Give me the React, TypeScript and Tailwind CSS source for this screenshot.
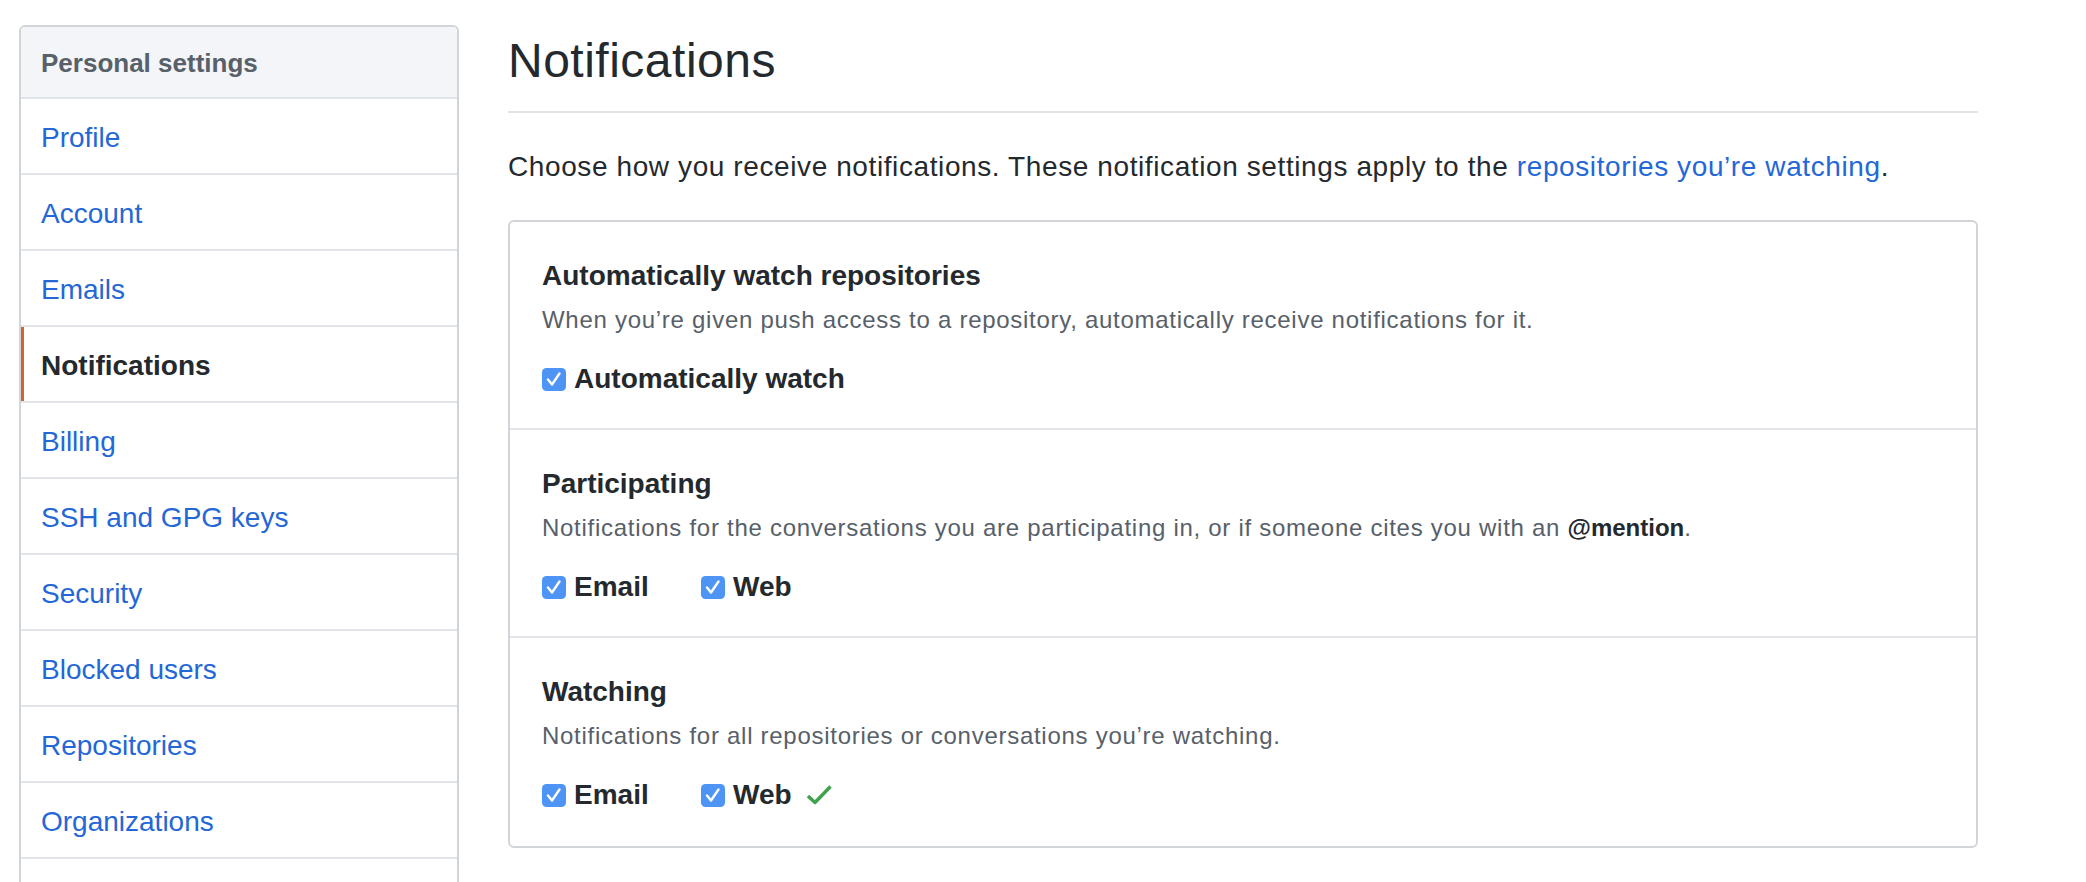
import React from "react";

const items = [
  "Profile",
  "Account",
  "Emails",
  "Notifications",
  "Billing",
  "SSH and GPG keys",
  "Security",
  "Blocked users",
  "Repositories",
  "Organizations",
  "",
];

function Check() {
  return (
    <svg width="24" height="23" viewBox="0 0 24 23" className="shrink-0">
      <rect x="0" y="0" width="24" height="23" rx="4.5" fill="#4d94f5" />
      <path d="M6 11.5 L10 16.5 L17.5 5.5" fill="none" stroke="#fff" strokeWidth="2.4" strokeLinecap="round" strokeLinejoin="round" />
    </svg>
  );
}

function Box({ label, wide }: { label: string; wide?: boolean }) {
  return (
    <div className={"flex items-center gap-[8px] " + (wide ? "w-[159px]" : "")}>
      <Check />
      <span className="text-[28px] font-bold leading-[42px] text-[#24292e]">{label}</span>
    </div>
  );
}

function Section({
  title,
  children,
  boxes,
  last,
}: {
  title: string;
  children: React.ReactNode;
  boxes: React.ReactNode;
  last?: boolean;
}) {
  return (
    <div className={"pl-[32px] pt-[33px] " + (last ? "pb-[30px]" : "pb-[28px] border-b-2 border-[#e1e4e8]")}>
      <div className="text-[28px] font-bold leading-[42px] text-[#24292e]">{title}</div>
      <div className="mt-[5px] text-[24px] leading-[36px] tracking-[0.72px] text-[#586069]">{children}</div>
      <div className="mt-[20px] flex items-center">{boxes}</div>
    </div>
  );
}

export default function App() {
  return (
    <div className="w-[2086px] h-[882px] overflow-hidden bg-white flex pl-[19px] pt-[25px] font-['Liberation_Sans',Arial,sans-serif]">
      <div className="w-[440px] shrink-0 self-start border-2 border-[#d1d5da] rounded-t-[6px] overflow-hidden">
        <div className="h-[72px] bg-[#f3f5f8] border-b-2 border-[#e1e4e8] flex items-center pl-[20px] pt-[2px] text-[26px] font-bold text-[#586069]">
          Personal settings
        </div>
        {items.map((it, i) => {
          const active = it === "Notifications";
          return (
            <div
              key={i}
              className="relative h-[76px] border-b-2 border-[#e1e4e8] flex items-center pl-[20px] pt-[4px]"
            >
              {active && <div className="absolute left-[-1px] top-0 bottom-0 w-[4px] bg-[#d4652a]" />}
              {it && (
                <span
                  className={
                    "text-[28px] leading-[34px] " +
                    (active ? "font-bold text-[#24292e]" : "text-[#2467d6]")
                  }
                >
                  {it}
                </span>
              )}
            </div>
          );
        })}
      </div>

      <div className="ml-[49px] w-[1470px] shrink-0 pt-[6px]">
        <div className="pb-[20px] border-b-2 border-[#e1e4e8]">
          <h1 className="text-[48px] leading-[60px] font-normal tracking-[0.5px] text-[#24292e]">Notifications</h1>
        </div>
        <p className="mt-[33px] text-[28px] leading-[42px] tracking-[0.6px] text-[#24292e]">
          Choose how you receive notifications. These notification settings apply to the{" "}
          <span className="text-[#2467d6]">repositories you’re watching</span>.
        </p>
        <div className="mt-[32px] border-2 border-[#d1d5da] rounded-[6px]">
          <Section
            title="Automatically watch repositories"
            boxes={<Box label="Automatically watch" />}
          >
            When you’re given push access to a repository, automatically receive notifications for it.
          </Section>
          <Section
            title="Participating"
            boxes={
              <>
                <Box label="Email" wide />
                <Box label="Web" />
              </>
            }
          >
            Notifications for the conversations you are participating in, or if someone cites you with an{" "}
            <span className="font-bold tracking-normal text-[#24292e]">@mention</span>.
          </Section>
          <Section
            title="Watching"
            last
            boxes={
              <>
                <Box label="Email" wide />
                <Box label="Web" />
                <svg width="25" height="20" viewBox="0 0 25 20" className="ml-[15px]">
                  <path d="M1 11 L8 17.5 L23.5 1.5" fill="none" stroke="#3fa34d" strokeWidth="3.4" strokeLinejoin="round" />
                </svg>
              </>
            }
          >
            Notifications for all repositories or conversations you’re watching.
          </Section>
        </div>
      </div>
    </div>
  );
}
